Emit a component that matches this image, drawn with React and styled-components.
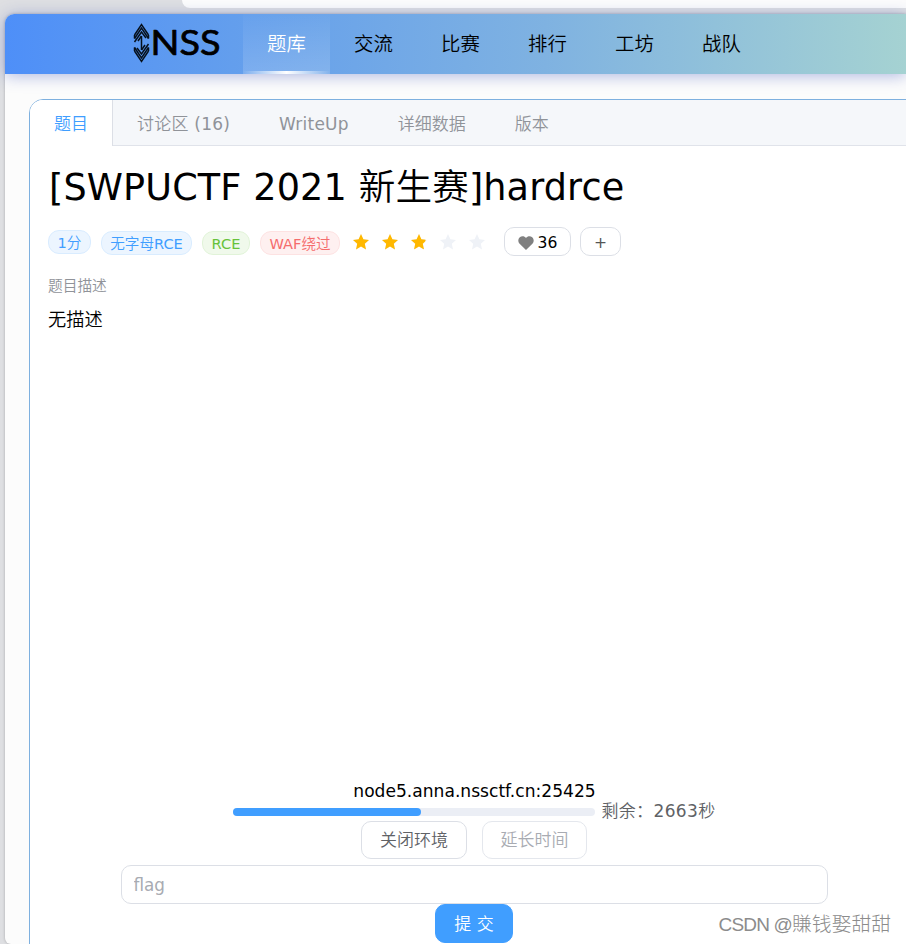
import React, { useState } from "react";
import styled, { createGlobalStyle } from "styled-components";

const GlobalStyle = createGlobalStyle`
  * {
    box-sizing: border-box;
  }
  body {
    margin: 0;
    overflow: hidden;
    background-color: #dedfe2;
    font-family: "DejaVu Sans", "Noto Sans CJK SC", sans-serif;
  }
  button, input {
    font-family: inherit;
  }
`;

const Browser = styled.div`
  position: relative;
  width: 906px;
  height: 944px;
  padding-left: 5px;
  overflow: hidden;
`;
const AddressBar = styled.div`
  height: 8px;
  margin: 0 0 6px 177px;
  background-color: #fcfcfc;
  border-radius: 0 0 0 16px;
`;
const Page = styled.div`
  height: 930px;
  background-color: #fcfcfc;
  border-radius: 9px 0 0 6px;
  box-shadow: 0 0 3px rgba(0, 0, 0, 0.25);
`;
const Header = styled.header`
  display: flex;
  height: 60px;
  padding-left: 128px;
  border-radius: 9px 0 0 0;
  background: linear-gradient(90deg, #4e8ff8 0%, #67a1eb 30%, #7fb2e1 60%, #a5d2d2 100%);
  box-shadow: 0 2px 16px rgba(50, 75, 185, 0.38);
`;
const Logo = styled.svg`
  display: block;
  width: 110px;
  height: 60px;
`;
const NavItem = styled.a`
  display: flex;
  justify-content: center;
  width: 87px;
  height: 60px;
  line-height: 61px;
  font-size: 19.4px;
  font-weight: 350;
  color: ${(props) => (props.$active ? "#fff" : "#000")};
  background: ${(props) =>
    props.$active
      ? "linear-gradient(90deg, rgba(255,255,255,0), #fff 50%, rgba(255,255,255,0)) bottom / 100% 3px no-repeat, linear-gradient(rgba(255,255,255,0.02), rgba(255,255,255,0.16))"
      : "none"};
`;

const Panel = styled.section`
  width: 890px;
  height: 860px;
  margin: 25px 0 0 24px;
  border: 1px solid #7eb0df;
  border-radius: 14px 0 0 0;
  background-color: #fff;
  overflow: hidden;
`;
const Tabs = styled.div`
  display: flex;
  height: 46px;
  background-color: #f5f7fa;
  border-bottom: 1px solid #e0e3ea;
`;
const Tab = styled.div`
  height: 46px;
  padding: 0 24px;
  line-height: 48px;
  font-size: 17px;
  font-weight: 350;
  white-space: nowrap;
  color: ${(props) => (props.$active ? "#409eff" : "#909399")};
  background-color: ${(props) => (props.$active ? "#fff" : "transparent")};
  border-right: 1px solid ${(props) => (props.$active ? "#dcdfe6" : "transparent")};
`;
const Body = styled.div`
  display: flex;
  flex-direction: column;
  height: 797px;
  padding: 0 18px;
`;
const Title = styled.h1`
  height: 80px;
  margin: 0 0 0 1px;
  line-height: 84px;
  font-size: 36.6px;
  font-weight: 350;
  letter-spacing: 0.14px;
  white-space: nowrap;
`;
const InfoRow = styled.div`
  display: flex;
  align-items: center;
  height: 30px;
`;

const tagColors = {
  blue: { text: "#409eff", back: "#ecf5ff", border: "#d9ecff" },
  green: { text: "#67c23a", back: "#f0f9eb", border: "#e1f3d8" },
  red: { text: "#f56c6c", back: "#fef0f0", border: "#fde2e2" },
};
const Tag = styled.span`
  display: flex;
  justify-content: center;
  width: ${(props) => props.$width}px;
  height: 24px;
  margin: 3px 10px 0 0;
  line-height: 24px;
  font-size: 14.6px;
  font-weight: 350;
  white-space: nowrap;
  border-radius: 11px;
  color: ${(props) => tagColors[props.$color].text};
  background-color: ${(props) => tagColors[props.$color].back};
  border: 1px solid ${(props) => tagColors[props.$color].border};

  &:first-child {
    margin-top: 1px;
  }
`;
const Stars = styled.div`
  display: flex;
  gap: 11px;
  margin: 2px 18px 0 2px;
`;
const SmallButton = styled.button`
  display: flex;
  align-items: center;
  justify-content: center;
  gap: 4px;
  width: ${(props) => props.$width}px;
  height: 29px;
  margin-right: 9px;
  padding: 3px 0 0;
  font-size: 15.6px;
  color: ${(props) => (props.$gray ? "#555" : "#000")};
  background-color: #fff;
  border: 1px solid #dcdfe6;
  border-radius: 10px;
`;
const Label = styled.div`
  margin-top: 17px;
  line-height: 26px;
  font-size: 14.7px;
  font-weight: 350;
  color: #909399;
`;
const Description = styled.p`
  margin: 6px 0 0;
  line-height: 30px;
  font-size: 18.2px;
  font-weight: 350;
`;

const Environment = styled.div`
  display: flex;
  flex-direction: column;
  align-items: center;
  margin-top: auto;
`;
const Address = styled.div`
  height: 20px;
  line-height: 20px;
  padding-left: 1px;
  font-size: 17.1px;
`;
const ProgressRow = styled.div`
  display: flex;
  align-items: center;
  width: 483px;
  height: 20px;
  line-height: 20px;
  font-size: 17px;
  font-weight: 350;
  color: #606266;
  white-space: nowrap;
`;
const Track = styled.div`
  width: 363px;
  height: 8px;
  margin: 2px 6px 0 0;
  border-radius: 4px;
  background-color: #ebeef5;
`;
const Bar = styled.div`
  height: 8px;
  border-radius: 4px;
  background-color: #409eff;
`;
const ButtonRow = styled.div`
  display: flex;
  gap: 15px;
`;
const Button = styled.button`
  width: ${(props) => props.$width}px;
  height: ${(props) => (props.$primary ? 39 : 38)}px;
  padding: 0 0 3px;
  font-size: 17px;
  font-weight: 350;
  border-radius: 10px;
  color: ${(props) => (props.$primary ? "#fff" : "#606266")};
  background-color: ${(props) => (props.$primary ? "#409eff" : "#fff")};
  border: 1px solid ${(props) => (props.$primary ? "#409eff" : "#dcdfe6")};

  &:disabled {
    color: #a8abb2;
    border-color: #e4e7ed;
  }
`;
const FlagInput = styled.input`
  width: 707px;
  height: 39px;
  margin-top: 6px;
  padding: 0 12px;
  font-size: 16.8px;
  border: 1px solid #dcdfe6;
  border-radius: 10px;
  outline: none;

  &::placeholder {
    color: #a8abb2;
  }
`;
const Latin = styled.span`
  font-weight: 400;
`;
const TimeLeft = styled.span`
  letter-spacing: 0.35px;
`;
const Watermark = styled.div`
  position: absolute;
  right: 15px;
  bottom: 5px;
  line-height: 28px;
  font-family: "Liberation Sans", "Noto Sans CJK SC", sans-serif;
  font-size: 19.8px;
  font-weight: 300;
  color: #8c8c8c;
  white-space: nowrap;

  ${Latin} {
    font-size: 19px;
    letter-spacing: -0.8px;
  }
`;

const navs = ["题库", "交流", "比赛", "排行", "工坊", "战队"];
const tabs = ["题目", "讨论区 (16)", "WriteUp", "详细数据", "版本"];
const tags = [
  { name: "1分", color: "blue", width: 43 },
  { name: "无字母RCE", color: "blue", width: 91 },
  { name: "RCE", color: "green", width: 48 },
  { name: "WAF绕过", color: "red", width: 80 },
];

// 中文用细体, 英文和数字用常规字重
function Mixed({ children }) {
  return (
    <span>
      {children
        .split(/([\x20-\x7e]+)/)
        .map((part, i) => (i % 2 ? <Latin key={i}>{part}</Latin> : part))}
    </span>
  );
}

const TabText = styled.span`
  letter-spacing: ${(props) => (props.$wide ? 0.22 : 0)}px;
`;

function Star({ on, cut }) {
  return (
    <svg width="18" height="18" viewBox="0 0 18 18" fill="#eff2f7">
      <path d="M9 1l2.4 5.2 5.6.7-4.2 3.8 1.2 5.8-5-2.9-5 2.9 1.2-5.8L1 6.9l5.6-.7z" />
      {on && (
        <path
          fill="#ffb800"
          style={{ clipPath: cut ? `inset(0 ${cut}px 0 0)` : "none" }}
          d="M9 1l2.4 5.2 5.6.7-4.2 3.8 1.2 5.8-5-2.9-5 2.9 1.2-5.8L1 6.9l5.6-.7z"
        />
      )}
    </svg>
  );
}

function NssLogo() {
  return (
    <Logo viewBox="0 0 110 60">
      <g fill="none" stroke="#06101c" strokeWidth="1.5">
        <path d="M1.5 21L8.5 10.5 15.5 21M1.5 24.5L8.5 14 15.5 24.5M1.5 28L8.5 18 13 24M5 27L8.5 22" />
        <path d="M15.5 37L8.5 47.5 1.5 37M15.5 33.5L8.5 44 1.5 33.5M15.5 30L8.5 40 4 34M12 31L8.5 36" />
        <path d="M8.5 22V36M1.5 21v3.5M15.5 21v3.5M1.5 33.5V37M15.5 33.5V37" />
      </g>
      <text
        x="17.5"
        y="41.2"
        fontFamily="Lato"
        fontSize="34.5"
        textLength="70"
        lengthAdjust="spacingAndGlyphs"
        stroke="#000"
        strokeWidth="0.7"
        strokeLinejoin="round"
      >
        NSS
      </text>
    </Logo>
  );
}

function App() {
  const [flag, setFlag] = useState("");

  return (
    <>
      <GlobalStyle />
      <Browser>
        <AddressBar />
        <Page>
          <Header>
            <NssLogo />
            {navs.map((nav, i) => (
              <NavItem key={nav} $active={i === 0}>
                {nav}
              </NavItem>
            ))}
          </Header>
          <Panel>
            <Tabs>
              {tabs.map((tab, i) => (
                <Tab key={tab} $active={i === 0}>
                  <TabText $wide={i === 1 || i === 2}>
                    <Mixed>{tab}</Mixed>
                  </TabText>
                </Tab>
              ))}
            </Tabs>
            <Body>
              <Title>
                <Mixed>[SWPUCTF 2021 新生赛]hardrce</Mixed>
              </Title>
              <InfoRow>
                {tags.map((tag) => (
                  <Tag key={tag.name} $color={tag.color} $width={tag.width}>
                    <Mixed>{tag.name}</Mixed>
                  </Tag>
                ))}
                <Stars>
                  {[1, 2, 3, 4, 5].map((n) => (
                    <Star key={n} on={n <= 3} cut={n === 3 ? 1.5 : 0} />
                  ))}
                </Stars>
                <SmallButton $width={67}>
                  <svg width="16" height="14" viewBox="0 0 16 14" fill="#808080">
                    <path d="M8 14L1.6 7.8C-.3 5.8 0 2.8 1.8 1.2 3.7-.4 6.6-.1 8 2c1.4-2.1 4.3-2.4 6.2-.8C16 2.8 16.3 5.8 14.4 7.8z" />
                  </svg>
                  36
                </SmallButton>
                <SmallButton $width={41} $gray>
                  +
                </SmallButton>
              </InfoRow>
              <Label>题目描述</Label>
              <Description>无描述</Description>
              <Environment>
                <Address>node5.anna.nssctf.cn:25425</Address>
                <ProgressRow>
                  <Track>
                    <Bar style={{ width: "52%" }} />
                  </Track>
                  <TimeLeft>
                    <Mixed>剩余：2663秒</Mixed>
                  </TimeLeft>
                </ProgressRow>
                <ButtonRow>
                  <Button $width={106}>关闭环境</Button>
                  <Button $width={105} disabled>
                    延长时间
                  </Button>
                </ButtonRow>
                <FlagInput
                  placeholder="flag"
                  value={flag}
                  onChange={(e) => setFlag(e.target.value)}
                />
                <Button $width={78} $primary>
                  提 交
                </Button>
              </Environment>
            </Body>
          </Panel>
        </Page>
        <Watermark>
          <Mixed>CSDN @賺钱娶甜甜</Mixed>
        </Watermark>
      </Browser>
    </>
  );
}

export default App;
